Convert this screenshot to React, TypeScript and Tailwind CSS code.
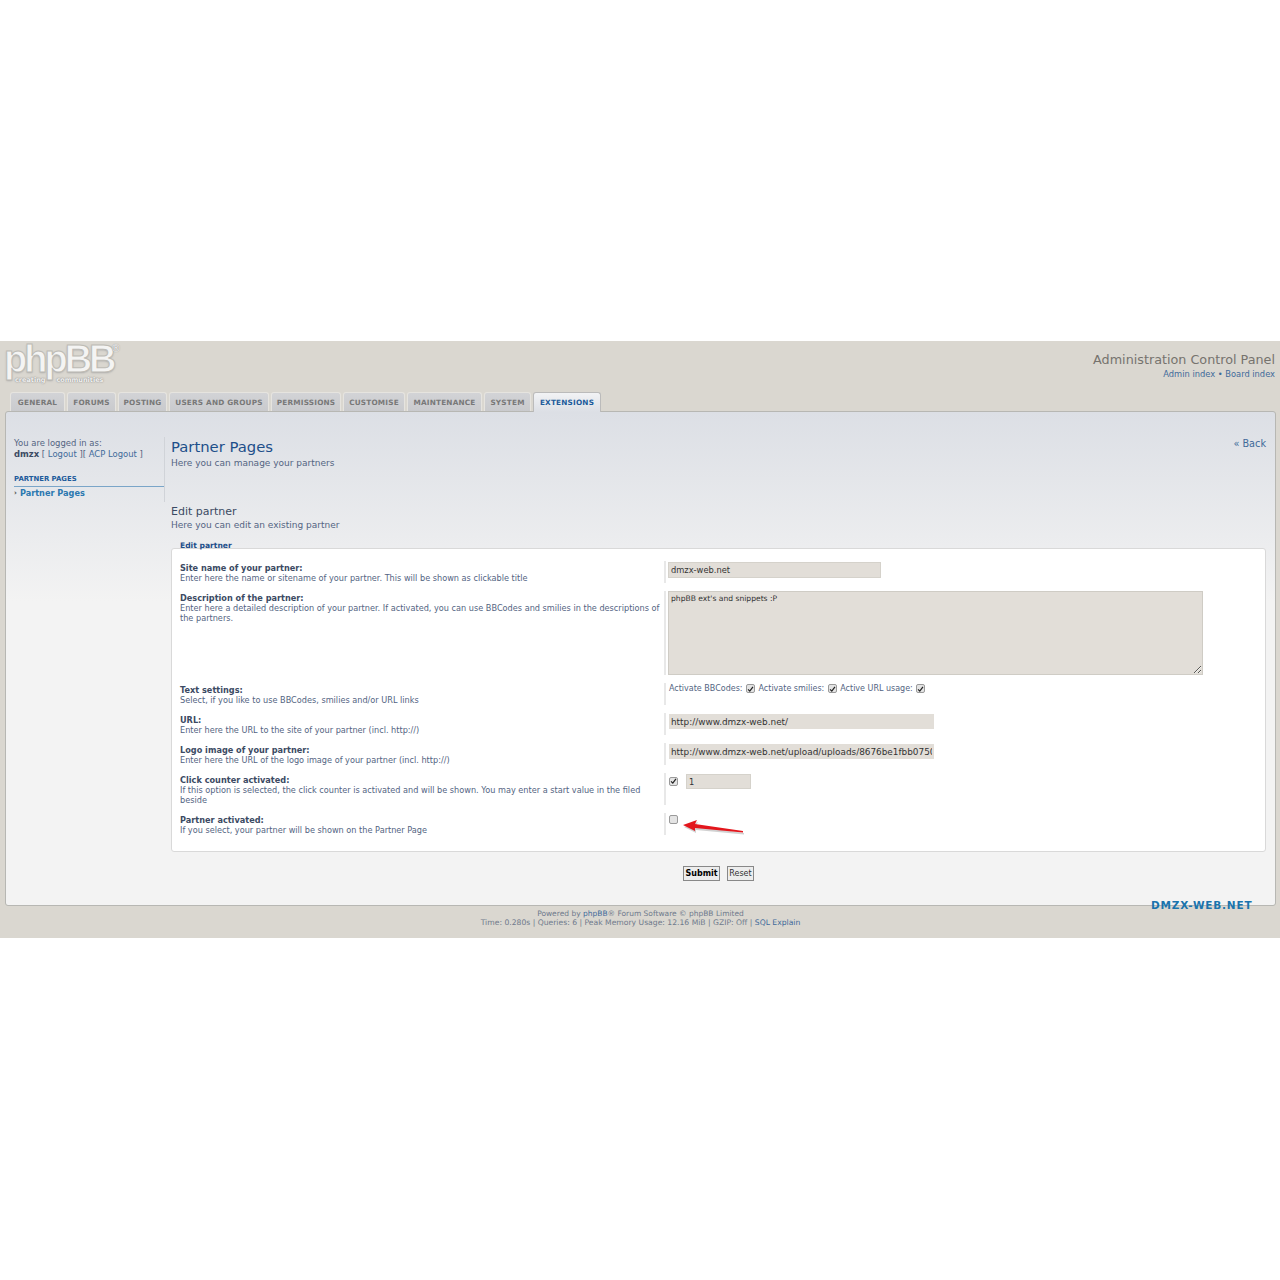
import type { ReactNode } from "react"

const tabs = [
  { label: "GENERAL", w: "w-[55px]" },
  { label: "FORUMS", w: "w-[49px]" },
  { label: "POSTING", w: "w-[49px]" },
  { label: "USERS AND GROUPS", w: "w-[100px]" },
  { label: "PERMISSIONS", w: "w-[70px]" },
  { label: "CUSTOMISE", w: "w-[62px]" },
  { label: "MAINTENANCE", w: "w-[75px]" },
  { label: "SYSTEM", w: "w-[47px]" },
]

function Check({ checked = true }: { checked?: boolean }) {
  return (
    <span className="inline-flex w-[9px] h-[9px] shrink-0 items-center justify-center rounded-[2px] border border-[#9a9a9a] bg-[#e4e4e4]">
      {checked && (
        <svg viewBox="0 0 10 10" className="w-[8px] h-[8px]">
          <path d="M1.5 5.5 L4 8 L8.5 2" fill="none" stroke="#222" strokeWidth="1.8" />
        </svg>
      )}
    </span>
  )
}

function Row({ title, desc, h, children }: { title: string; desc: string; h: string; children: ReactNode }) {
  return (
    <div className={`flex ${h}`}>
      <div className="w-[484px] pr-[2px] pt-[2px] leading-[10.2px]">
        <div className="font-bold text-[#3b4a63]">{title}</div>
        <div className="text-[#536482]">{desc}</div>
      </div>
      <div className="border-l-2 border-[#e8e8e8] pl-[2px] flex-1">{children}</div>
    </div>
  )
}

export default function App() {
  return (
    <div className="min-h-screen bg-white pt-[341px] text-[8.17px] font-['DejaVu_Sans',sans-serif]">
      <div className="relative h-[597px] bg-[#dad7d0] pl-[5px] pr-[4px]">
        <div className="flex h-[51px] justify-between">
          <div className="relative w-[120px] text-[#f4f4f3]">
            <div className="mt-[1px] -ml-[1px] text-[38px] leading-[35px] font-bold font-['Liberation_Sans',sans-serif] tracking-[-3px] [-webkit-text-stroke:1px_#bdbbb5] [text-shadow:0_1px_2px_#aaa]">
              phpBB
            </div>
            <div className="absolute left-[10px] top-[35px] flex gap-[11px] text-[6.5px] leading-[9px] font-bold whitespace-nowrap text-[#f2f2f2] [text-shadow:0_0_1.5px_#666]">
              <span>creating</span>
              <span>communities</span>
            </div>
            <div className="absolute left-[106px] top-[2px] text-[10px] leading-[12px] text-[#f2f2f2] [text-shadow:0_0_1px_#777]">®</div>
          </div>
          <div className="pt-[10px] pr-[1px] text-right">
            <div className="text-[12.75px] leading-[18px] text-[#76736e]">Administration Control Panel</div>
            <div className="text-[8.3px] leading-[11px] text-[#3f6a9a]">Admin index • Board index</div>
          </div>
        </div>

        <div className="flex h-[19px] gap-[2px] pl-[5px]">
          {tabs.map((t) => (
            <div
              key={t.label}
              className={`${t.w} flex items-center justify-center rounded-t-[3px] border border-b-0 border-[#e6e4df] bg-gradient-to-b from-[#d2d3d6] to-[#c9cacd] pt-[3px] text-[7.3px] font-bold tracking-[0.2px] text-[#787878]`}
            >
              {t.label}
            </div>
          ))}
          <div className="relative z-10 flex h-[20px] w-[68px] items-center justify-center rounded-t-[3px] border border-b-0 border-[#bbbbbb] bg-gradient-to-b from-[#f2f3f5] to-[#dcdfe5] pt-[2px] text-[7.3px] font-bold tracking-[0.2px] text-[#1d5b9b]">
            EXTENSIONS
          </div>
        </div>

        <div className="flex h-[495px] rounded-[3px] border border-[#b7b7b3] bg-[linear-gradient(#dcdfe5_0px,#f3f3f3_190px)] pl-[8px] pr-[9px] pt-[25px]">
          <div className="w-[151px] shrink-0">
            <div className="h-[65px] border-r border-[#d0d3d8]">
              <div className="pt-[1px] text-[8.45px] leading-[11px] text-[#536482]">
                <div>You are logged in as:</div>
                <div>
                  <span className="font-bold text-[#3b4a63]">dmzx</span> [ <span className="text-[#3f6a9a]">Logout</span> ][ <span className="text-[#3f6a9a]">ACP Logout</span> ]
                </div>
              </div>
              <div className="mt-[15px] border-b border-[#7aa5c8] pb-[2px] text-[6.9px] leading-[9px] font-bold text-[#1d5b9b]">
                PARTNER PAGES
              </div>
              <div className="mt-[1px] flex items-center gap-[3px] leading-[10px] font-bold text-[#2b78b0]">
                <span className="text-[7px] text-[#444]">›</span>
                <span>Partner Pages</span>
              </div>
            </div>
          </div>

          <div className="flex-1 pl-[6px]">
            <div className="flex justify-between">
              <div>
                <div className="text-[14.8px] leading-[19px] text-[#1d4f8a]">Partner Pages</div>
                <div className="mt-[2px] text-[9px] leading-[11px] text-[#536482]">Here you can manage your partners</div>
              </div>
              <div className="text-[9.7px] leading-[13px] text-[#3f6a9a]">« Back</div>
            </div>

            <div className="mt-[36px] text-[11px] leading-[14px] text-[#3b4a63]">Edit partner</div>
            <div className="mt-[1px] text-[9px] leading-[11px] text-[#536482]">Here you can edit an existing partner</div>

            <div className="relative mt-[17px] h-[304px] rounded-[3px] border border-[#d9d9d9] bg-white pl-[8px] pt-[12px] pr-[4px]">
              <div className="absolute left-[8px] top-[-9px] text-[7.6px] leading-[11px] font-bold text-[#1d4f8a]">Edit partner</div>
              <div className="flex flex-col gap-[8px]">
                <Row title="Site name of your partner:" desc="Enter here the name or sitename of your partner. This will be shown as clickable title" h="h-[22px]">
                  <input readOnly value="dmzx-web.net" className="mt-[1px] block h-[16px] w-[213px] border border-[#d5d2cb] bg-[#e2ded8] px-[2px] text-[8.3px] text-[#333]" />
                </Row>
                <Row title="Description of the partner:" desc="Enter here a detailed description of your partner. If activated, you can use BBCodes and smilies in the descriptions of the partners." h="h-[84px]">
                  <textarea readOnly value="phpBB ext's and snippets :P" className="block h-[84px] w-[535px] border border-[#cfccc5] bg-[#e2ded8] px-[2px] py-[1px] text-[7.6px] text-[#333]" />
                </Row>
                <Row title="Text settings:" desc="Select, if you like to use BBCodes, smilies and/or URL links" h="h-[22px]">
                  <div className="ml-[1px] flex items-center gap-[3.5px] pt-[1px] text-[8px] leading-[10px] text-[#536482]">
                    <span>Activate BBCodes:</span>
                    <span className="-mt-[1px] flex"><Check /></span>
                    <span>Activate smilies:</span>
                    <span className="-mt-[1px] flex"><Check /></span>
                    <span>Active URL usage:</span>
                    <span className="-mt-[1px] flex"><Check /></span>
                  </div>
                </Row>
                <Row title="URL:" desc="Enter here the URL to the site of your partner (incl. http://)" h="h-[22px]">
                  <input readOnly value="http://www.dmzx-web.net/" className="ml-[1px] mt-[1px] block h-[15px] w-[265px] bg-[#e2ded8] px-[2px] text-[8.9px] text-[#333]" />
                </Row>
                <Row title="Logo image of your partner:" desc="Enter here the URL of the logo image of your partner (incl. http://)" h="h-[22px]">
                  <input readOnly value="http://www.dmzx-web.net/upload/uploads/8676be1fbb0750c3a1" className="ml-[1px] mt-[1px] block h-[15px] w-[265px] bg-[#e2ded8] px-[2px] text-[8.9px] text-[#333]" />
                </Row>
                <Row title="Click counter activated:" desc="If this option is selected, the click counter is activated and will be shown. You may enter a start value in the filed beside" h="h-[32px]">
                  <div className="ml-[1px] flex items-start gap-[5px]">
                    <span className="mt-[3px]"><Check /></span>
                    <input readOnly value="1" className="ml-[3px] mt-[1px] h-[15px] w-[65px] border border-[#d5d2cb] bg-[#e2ded8] px-[2px] text-[8.3px] text-[#333]" />
                  </div>
                </Row>
                <Row title="Partner activated:" desc="If you select, your partner will be shown on the Partner Page" h="h-[22px]">
                  <div className="ml-[1px] pt-[2px]"><Check checked={false} /></div>
                </Row>
              </div>
              <svg viewBox="0 0 62 16" className="absolute left-[511px] top-[271px] h-[16px] w-[62px]">
                <path d="M0 5 L14 0 L12 4 L60 11 L60 12.5 L12 8 L12 11 Z" fill="#000" opacity="0.18" transform="translate(1 2)" />
                <path d="M0 5 L14 0 L12 4 L60 11 L60 12.5 L12 8 L12 11 Z" fill="#e3161c" />
              </svg>
            </div>

            <div className="mt-[14px] flex justify-center gap-[7px]">
              <button className="h-[15px] w-[37px] border border-[#888] bg-[#ededed] text-[8px] leading-[13px] font-bold text-black">Submit</button>
              <button className="h-[15px] w-[27px] border border-[#888] bg-[#ededed] text-[8px] leading-[13px] text-[#333]">Reset</button>
            </div>
          </div>
        </div>

        <div className="mt-[3px] text-center leading-[9.3px] text-[#6f7a8c]">
          <div className="text-[7.5px]">
            Powered by <span className="text-[#3f6a9a]">phpBB</span>® Forum Software © phpBB Limited
          </div>
          <div className="text-[7.65px]">
            Time: 0.280s | Queries: 6 | Peak Memory Usage: 12.16 MiB | GZIP: Off | <span className="text-[#3f6a9a]">SQL Explain</span>
          </div>
        </div>

        <div className="absolute left-[1151px] top-[558px] text-[10.5px] leading-[12px] font-bold tracking-[0.8px] text-[#1a74ad]">
          DMZX-WEB.NET
        </div>
      </div>
    </div>
  )
}
